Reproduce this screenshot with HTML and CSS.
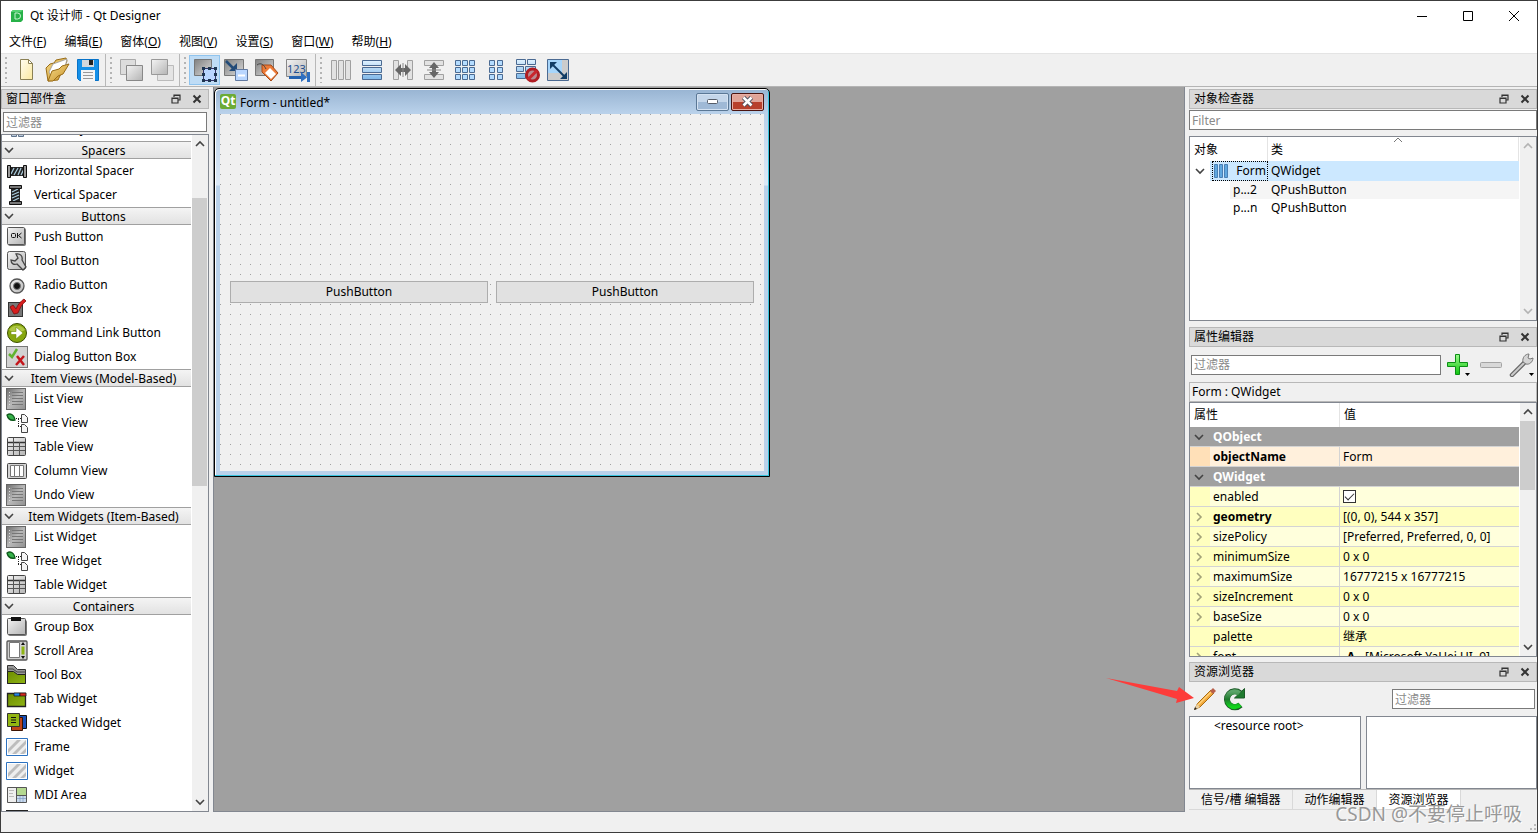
FILE: index.html
```html
<!DOCTYPE html>
<html lang="zh-CN">
<head>
<meta charset="UTF-8">
<meta name="viewport" content="width=device-width, initial-scale=1.0">
<title>Qt 设计师 - Qt Designer</title>
<link rel="stylesheet" href="styles.css">
</head>
<body>

<!-- shared icons -->
<svg class="sprite" aria-hidden="true">
  <defs>
    <linearGradient id="gGray" x1="0" y1="0" x2="1" y2="1"><stop offset="0" stop-color="#f4f4f4"/><stop offset="1" stop-color="#b4b4b4"/></linearGradient>
    <linearGradient id="gDark" x1="0" y1="0" x2="1" y2="1"><stop offset="0" stop-color="#808080"/><stop offset="1" stop-color="#dcdcdc"/></linearGradient>
    <linearGradient id="gList" x1="0" y1="0" x2="1" y2="1"><stop offset="0" stop-color="#6c6c6c"/><stop offset=".5" stop-color="#b8b8b8"/><stop offset="1" stop-color="#909090"/></linearGradient>
    <linearGradient id="gBlue" x1="0" y1="0" x2="0" y2="1"><stop offset="0" stop-color="#e0f2ff"/><stop offset="1" stop-color="#7fb8e8"/></linearGradient>
    <linearGradient id="gGreen" x1="0" y1="0" x2="1" y2="1"><stop offset="0" stop-color="#6c8c00"/><stop offset="1" stop-color="#8fb414"/></linearGradient>
    <linearGradient id="gFolder" x1="0" y1="0" x2="1" y2="1"><stop offset="0" stop-color="#f7dc8a"/><stop offset="1" stop-color="#c8922a"/></linearGradient>
    <linearGradient id="gPage" x1="0" y1="0" x2="1" y2="1"><stop offset="0" stop-color="#fffdf0"/><stop offset="1" stop-color="#fbe9a0"/></linearGradient>
    <linearGradient id="gPlus" x1="0" y1="0" x2="0" y2="1"><stop offset="0" stop-color="#9dfb8d"/><stop offset="1" stop-color="#0fc40f"/></linearGradient>
    <linearGradient id="gReload" x1="0" y1="0" x2="0" y2="1"><stop offset="0" stop-color="#5aa468"/><stop offset=".5" stop-color="#1f7a2e"/><stop offset="1" stop-color="#10d41c"/></linearGradient>
  </defs>
  <symbol id="down" viewBox="0 0 10 10"><path d="M1 3l4 4 4-4" fill="none" stroke="#444" stroke-width="1.600"/></symbol>
  <symbol id="up" viewBox="0 0 10 10"><path d="M1 7l4-4 4 4" fill="none" stroke="#444" stroke-width="1.600"/></symbol>
  <symbol id="right" viewBox="0 0 10 10"><path d="M3 1l4 4-4 4" fill="none" stroke="#a3a37a" stroke-width="1.600"/></symbol>
  <symbol id="float" viewBox="0 0 10 10"><path d="M3 3V1h6v5H7M3 1.500h6M1 4h6v5H1zM1 4.500h6" fill="none" stroke="#333" stroke-width="1.200"/></symbol>
  <symbol id="close" viewBox="0 0 10 10"><path d="M1.500 1.500l7 7M8.500 1.500l-7 7" stroke="#333" stroke-width="2"/></symbol>

  <symbol id="hspacer" viewBox="0 0 22 22"><path d="M4 7h14v9H4z" fill="#222"/><path d="M5 14l3-6M8 15l4-7M12 15l3-7M15 15l3-6" stroke="#a9cbdc" stroke-width="1.300"/><path d="M1.500 5.500h3v12h-3zM17.500 5.500h3v12h-3z" fill="#999" stroke="#111"/></symbol>
  <symbol id="vspacer" viewBox="0 0 22 22"><path d="M5 4h9v14H5z" fill="#222"/><path d="M6 8l6-3M6 11l7-3M6 14l7-3M7 17l6-3" stroke="#a9cbdc" stroke-width="1.300"/><path d="M3.500 1.500h12v3h-12zM3.500 17.500h12v3h-12z" fill="#777" stroke="#111"/></symbol>
  <symbol id="pushbtn" viewBox="0 0 22 22"><rect x="2" y="2" width="18" height="18" rx="2" fill="#777"/><rect x="1.500" y="1.500" width="17" height="17" rx="1" fill="url(#gGray)" stroke="#555"/><rect x="5.500" y="7.500" width="4" height="4" rx="1" fill="none" stroke="#111"/><path d="M11.500 7v5M15.500 7l-3 2.500 3 2.500" fill="none" stroke="#111"/></symbol>
  <symbol id="toolbtn" viewBox="0 0 22 22"><rect x="1.500" y="1.500" width="18" height="18" rx="2" fill="url(#gGray)" stroke="#555"/><path d="M10 4c4-1 7 2 6 6l4 7-3 3-6-6c-3 1-6 0-6-4l4 1 3-3z" fill="#ccc" stroke="#444" stroke-width="1.300"/></symbol>
  <symbol id="radio" viewBox="0 0 22 22"><circle cx="11" cy="12" r="7" fill="url(#gGray)" stroke="#555" stroke-width="1.300"/><circle cx="11" cy="12" r="3.500" fill="#111" stroke="#777"/></symbol>
  <symbol id="check" viewBox="0 0 22 22"><rect x="2.500" y="4.500" width="14" height="14" fill="#777" stroke="#333"/><path d="M4 9l3-2 3 4c2-5 5-8 8-10l2 2c-4 3-6 7-8 12l-4 1z" fill="#d81e1e" stroke="#7d0d0d" stroke-width=".8"/></symbol>
  <symbol id="cmdlink" viewBox="0 0 22 22"><circle cx="11" cy="11" r="9.500" fill="#86a70e" stroke="#3d4f00"/><path d="M3 8a9 8 0 0 1 16 0c-5 3-11 3-16 0z" fill="#c2d55c" opacity=".7"/><path d="M5 9.500h5V5l7 6-7 6v-4.500H5z" fill="#fff" stroke="#6f8d08" stroke-width=".6"/></symbol>
  <symbol id="dlgbox" viewBox="0 0 22 22"><rect x=".5" y=".5" width="21" height="21" fill="#d2d2d2" stroke="#777"/><path d="M3 8l3 3 5-8" fill="none" stroke="#62b32e" stroke-width="2.500"/><path d="M11 10l7 9M18 10l-8 9" stroke="#c4161c" stroke-width="2.500"/></symbol>
  <symbol id="list" viewBox="0 0 22 22"><rect x=".5" y=".5" width="19" height="21" fill="url(#gList)" stroke="#666"/><path d="M6 4.500h11M6 7.500h11M6 10.500h11M6 13.500h11M6 16.500h11" stroke="#777"/><path d="M3 4.500h1M3 7.500h1M3 10.500h1M3 13.500h1M3 16.500h1" stroke="#ddd"/></symbol>
  <symbol id="tree" viewBox="0 0 22 22"><path d="M1 3c3-2 7-1 8 5-4 1-7-1-8-5z" fill="#36b24a" stroke="#0f5a1c" stroke-width="1.300"/><path d="M10 6.500h5M12.500 7v8M12 14.500h3" fill="none" stroke="#222" stroke-dasharray="1 1"/><path d="M15.500 2.500h3l3 3v5h-6zM15.500 12.500h3l3 3v5h-6z" fill="#f5f5f5" stroke="#444"/></symbol>
  <symbol id="table" viewBox="0 0 22 22"><rect x="1.500" y="1.500" width="18" height="18" rx="1" fill="url(#gGray)" stroke="#444"/><path d="M2 6.500h17" stroke="#333" stroke-width="1.500"/><path d="M2 10.500h17M2 14.500h17M7.500 2v17M13.500 6v13" stroke="#555"/></symbol>
  <symbol id="column" viewBox="0 0 22 22"><rect x="1.500" y="3.500" width="19" height="15" rx="1" fill="#d4d4d4" stroke="#444"/><path d="M4.500 5.500h4v11h-4zM8.500 5.500h5v11h-5zM13.500 5.500h4v11h-4z" fill="#fff" stroke="#777"/></symbol>
  <symbol id="group" viewBox="0 0 22 22"><rect x="2" y="4" width="19" height="16" rx="2" fill="#777"/><rect x="1.500" y="2.500" width="18" height="16" rx="1" fill="url(#gGray)" stroke="#555"/><path d="M5 1h10v4H5z" fill="#111"/></symbol>
  <symbol id="scroll" viewBox="0 0 22 22"><rect x="1" y="1" width="20" height="19" rx="1" fill="#d0d0d0" stroke="#555" stroke-width="1.300"/><path d="M3.500 2.500h10v15h-10z" fill="#fff" stroke="#777"/><path d="M15.500 6.500h3v8h-3z" fill="#8fb414"/><path d="M15 5l2-3 2 3zM15 16h4l-2 3z" fill="#111"/></symbol>
  <symbol id="toolbox" viewBox="0 0 22 22"><path d="M1.500 1.500h6l4 4h8v14h-18z" fill="#999" stroke="#333"/><path d="M1 5h6l4 3h9" fill="none" stroke="#444"/><path d="M1.500 7.500h6l4 3h8v9h-18z" fill="url(#gGreen)" stroke="#222"/></symbol>
  <symbol id="tab" viewBox="0 0 22 22"><path d="M1.500 5.500h18v13h-18z" fill="url(#gGreen)" stroke="#222" stroke-width="1.300"/><path d="M8 5h6v3H8z" fill="#2688e8" stroke="#111" stroke-width=".7"/><path d="M14 5h6v3h-6z" fill="#d4281e" stroke="#111" stroke-width=".7"/></symbol>
  <symbol id="stacked" viewBox="0 0 22 22"><path d="M9.500 3.500h11v13h-11z" fill="#1950b8" stroke="#111"/><path d="M5.500 5.500h11v13h-11z" fill="#bd4419" stroke="#3b1303"/><path d="M1.500 1.500h12v13h-12z" fill="#92b512" stroke="#333"/><path d="M5 5.500h5M5 8h5M5 10.500h5" stroke="#111"/></symbol>
  <symbol id="frame" viewBox="0 0 22 22"><path d="M.5 2.500h21v17H.5z" fill="#fff" stroke="#2d72c0"/><path d="M2 4h18v14H2z" fill="#eee"/><path d="M2 13l9-9h4L2 17zM6 18L20 4v4L10 18zM14 18l6-6v4l-2 2z" fill="#bdbdbd"/></symbol>
  <symbol id="mdi" viewBox="0 0 22 22"><path d="M1.500 3.500h19v15h-19z" fill="#eee" stroke="#555"/><path d="M11 4h9v7h-9z" fill="#b4d890"/><path d="M11 12h9v6h-9z" fill="#c9daee"/><path d="M10.500 4v15M11 11.500h9" stroke="#555"/><path d="M3 6.500h5M3 9.500h4M3 12.500h5" stroke="#bbb"/><path d="M11 14.500h9M14 12v6M17 12v6" stroke="#7e9bc0" stroke-width=".7"/></symbol>
</svg>

<header class="titlebar">
  <svg class="app-icon" width="14" height="14" viewBox="0 0 14 14"><path d="M3 1h10v10l-2 2H1V3z" fill="#27b148"/><path d="M1 3l2-2h10l-2 2z" fill="#54d171"/><path d="M5 4h2.500a3 3 0 0 1 0 6H5z" fill="none" stroke="#c7f5d0"/></svg>
  <h1>Qt 设计师 - Qt Designer</h1>
  <div class="window-controls">
    <button aria-label="最小化"><svg width="12" height="12"><path d="M1 6.500h10" stroke="#000"/></svg></button>
    <button aria-label="最大化"><svg width="12" height="12"><path d="M1.500 1.500h9v9h-9z" fill="none" stroke="#000"/></svg></button>
    <button aria-label="关闭"><svg width="12" height="12"><path d="M1 1l10 10M11 1L1 11" stroke="#000"/></svg></button>
  </div>
</header>

<nav class="menubar">
  <button>文件(<u>F</u>)</button>
  <button>编辑(<u>E</u>)</button>
  <button>窗体(<u>O</u>)</button>
  <button>视图(<u>V</u>)</button>
  <button>设置(<u>S</u>)</button>
  <button>窗口(<u>W</u>)</button>
  <button>帮助(<u>H</u>)</button>
</nav>

<div class="toolbar">
  <div class="tool-group">
    <button aria-label="新建"><svg width="24" height="24"><path d="M6.500 1.500h8l4 4v16h-12z" fill="url(#gPage)" stroke="#8a8054"/><path d="M14.500 1.500v4h4z" fill="#fff" stroke="#8a8054"/></svg></button>
    <button aria-label="打开"><svg width="26" height="26"><path d="M2 11l4-4 4-1 2-3 10-2 1 3-9 19-10 1z" fill="url(#gFolder)" stroke="#9a6d17"/><path d="M5 15l4-8L23 2l-2 8-14 9z" fill="#fff" stroke="#999" stroke-width=".8"/><path d="M4 24l4-10 7-2 3-3 7-2-6 10-5 2-5 5z" fill="url(#gFolder)" stroke="#9a6d17"/></svg></button>
    <button aria-label="保存"><svg width="24" height="24"><path d="M1.500 1.500h21v21h-19l-2-2z" fill="#1590e8" stroke="#0873c8"/><path d="M6 2h12v7H6z" fill="#d4d8dc"/><path d="M13 2h4v5h-4z" fill="#222"/><path d="M5 12h14v11H5z" fill="#f5f5f5"/><path d="M7 14.500h10M7 17.500h10M7 20.500h10" stroke="#999"/></svg></button>
  </div>
  <div class="tool-group">
    <button aria-label="置后"><svg width="24" height="24"><path d="M1.500 1.500h15v15h-15z" fill="#ddd" stroke="#aaa"/><path d="M7.500 7.500h16v15h-16z" fill="url(#gGray)" stroke="#888"/></svg></button>
    <button aria-label="置前"><svg width="24" height="24"><path d="M7.500 7.500h16v15h-16z" fill="#e4e4e4" stroke="#bbb"/><path d="M1.500 1.500h16v15h-16z" fill="url(#gGray)" stroke="#999"/></svg></button>
  </div>
  <div class="tool-group">
    <button class="active" aria-label="编辑窗口部件"><svg width="26" height="26"><path d="M2.500 2.500h17v16h-17z" fill="url(#gDark)" stroke="#777"/><path d="M11.500 11.500h12v12h-12z" fill="#b9d6ff" stroke="#336"/><path d="M10 10h3v3h-3zM16 10h3v3h-3zM22 10h3v3h-3zM10 16h3v3h-3zM22 16h3v3h-3zM10 22h3v3h-3zM16 22h3v3h-3zM22 22h3v3h-3z" fill="#1d3550"/></svg></button>
    <button aria-label="编辑信号/槽"><svg width="24" height="24"><path d="M.5 1.500h19v16H.5z" fill="url(#gDark)" stroke="#777"/><path d="M2 3l8 8" stroke="#234b78" stroke-width="2.500"/><path d="M13 5v8H5z" fill="#234b78"/><path d="M11.500 11.500h12v11h-12z" fill="#b9d6ff" stroke="#6179a0"/><path d="M14 17.500h7" stroke="#fff" stroke-width="2"/></svg></button>
    <button aria-label="编辑伙伴"><svg width="24" height="24"><path d="M.5 1.500h18v16H.5z" fill="url(#gDark)" stroke="#777"/><path d="M7 7h9l7 8-7 8-9-9z" fill="#ed7b38" stroke="#a54816"/><path d="M15 10l6 6-5 5-6-6z" fill="#fff"/><path d="M2 7c4-3 7 0 9 4" fill="none" stroke="#444"/></svg></button>
    <button aria-label="编辑 Tab 顺序"><svg width="26" height="26"><path d="M1.500 2.500h20v17h-20z" fill="url(#gGray)" stroke="#888"/><text x="2" y="16" class="tab-order">123</text><path d="M4 20.500h13" stroke="#2563b0" stroke-width="3"/><path d="M16 15l6 5.500-6 4.500zM22 15h3v10h-3z" fill="#2f6fc0"/></svg></button>
  </div>
  <div class="tool-group">
    <button aria-label="水平布局"><svg width="24" height="24"><path d="M2.500 2.500h5v19h-5zM9.500 2.500h5v19h-5zM16.500 2.500h5v19h-5z" fill="#e2e2e2" stroke="#a0a0a0"/></svg></button>
    <button aria-label="垂直布局"><svg width="24" height="24"><path d="M2.500 2.500h19v5h-19zM2.500 9.500h19v5h-19zM2.500 16.500h19v5h-19z" fill="url(#gBlue)" stroke="#4b6a92"/></svg></button>
    <button aria-label="使用分裂器水平布局"><svg width="24" height="24"><path d="M2.500 2.500h5v19h-5zM16.500 2.500h5v19h-5z" fill="#e2e2e2" stroke="#a0a0a0"/><path d="M4 12l6-6v4h4V6l6 6-6 6v-4h-4v4z" fill="#666"/><path d="M12 5v14" stroke="#888"/></svg></button>
    <button aria-label="使用分裂器垂直布局"><svg width="24" height="24"><path d="M2.500 2.500h19v5h-19zM2.500 16.500h19v5h-19z" fill="#e2e2e2" stroke="#a0a0a0"/><path d="M12 4l5 6h-3v4h3l-5 6-5-6h3v-4H7z" fill="#666"/><path d="M5 12h14" stroke="#888"/></svg></button>
    <button aria-label="栅格布局"><svg width="24" height="24"><path d="M2.500 2.500h5v5h-5zM9.500 2.500h5v5h-5zM16.500 2.500h5v5h-5zM2.500 9.500h5v5h-5zM9.500 9.500h5v5h-5zM16.500 9.500h5v5h-5zM2.500 16.500h5v5h-5zM9.500 16.500h5v5h-5zM16.500 16.500h5v5h-5z" fill="#b4dcff" stroke="#4b6a92"/></svg></button>
    <button aria-label="窗体布局"><svg width="24" height="24"><path d="M5.500 2.500h5v5h-5zM13.500 2.500h5v5h-5zM5.500 9.500h5v5h-5zM13.500 9.500h5v5h-5zM5.500 16.500h5v5h-5zM13.500 16.500h5v5h-5z" fill="#b4dcff" stroke="#4b6a92"/></svg></button>
    <button aria-label="打破布局"><svg width="26" height="26"><path d="M2.500 2.500h9v5h-9zM13.500 2.500h8v5h-8zM2.500 9.500h7v5h-7zM11.500 9.500h10v5h-10zM2.500 16.500h9v5h-9z" fill="url(#gBlue)" stroke="#4b6a92"/><circle cx="18.500" cy="18" r="6" fill="#b98a90" stroke="#b01c22" stroke-width="3"/><path d="M14 22.500l9-9" stroke="#c8262c" stroke-width="3"/></svg></button>
    <button aria-label="调整大小"><svg width="24" height="24"><path d="M1.500 1.500h21v21h-21z" fill="#ccc" stroke="#4b6a92"/><path d="M2 2h14v13H2z" fill="#a7d5fa"/><path d="M5 5l13 13" stroke="#123d66" stroke-width="2"/><path d="M4 4h7l-7 7zM21 21h-7l7-7z" fill="#123d66"/></svg></button>
  </div>
</div>

<main class="workspace">
  <aside class="dock widget-box">
    <div class="dock-title"><h2>窗口部件盒</h2><button aria-label="浮动"><svg><use href="#float"/></svg></button><button aria-label="关闭"><svg><use href="#close"/></svg></button></div>
    <input class="filter" type="text" placeholder="过滤器" aria-label="过滤窗口部件">
    <div class="panel scroll-panel widget-list">
      <div class="panel-body">
        <ul><li class="cut-top"><svg><path d="M5.500 11.500h5v7h-5zM12.500 11.500h5v7h-5z" fill="#b8c8da" stroke="#60748c"/></svg>Form Layout</li></ul>
        <h3><svg><use href="#down"/></svg><span>Spacers</span></h3>
        <ul>
          <li><svg><use href="#hspacer"/></svg>Horizontal Spacer</li>
          <li><svg><use href="#vspacer"/></svg>Vertical Spacer</li>
        </ul>
        <h3><svg><use href="#down"/></svg><span>Buttons</span></h3>
        <ul>
          <li><svg><use href="#pushbtn"/></svg>Push Button</li>
          <li><svg><use href="#toolbtn"/></svg>Tool Button</li>
          <li><svg><use href="#radio"/></svg>Radio Button</li>
          <li><svg><use href="#check"/></svg>Check Box</li>
          <li><svg><use href="#cmdlink"/></svg>Command Link Button</li>
          <li><svg><use href="#dlgbox"/></svg>Dialog Button Box</li>
        </ul>
        <h3><svg><use href="#down"/></svg><span>Item Views (Model-Based)</span></h3>
        <ul>
          <li><svg><use href="#list"/></svg>List View</li>
          <li><svg><use href="#tree"/></svg>Tree View</li>
          <li><svg><use href="#table"/></svg>Table View</li>
          <li><svg><use href="#column"/></svg>Column View</li>
          <li><svg><use href="#list"/></svg>Undo View</li>
        </ul>
        <h3><svg><use href="#down"/></svg><span>Item Widgets (Item-Based)</span></h3>
        <ul>
          <li><svg><use href="#list"/></svg>List Widget</li>
          <li><svg><use href="#tree"/></svg>Tree Widget</li>
          <li><svg><use href="#table"/></svg>Table Widget</li>
        </ul>
        <h3><svg><use href="#down"/></svg><span>Containers</span></h3>
        <ul>
          <li><svg><use href="#group"/></svg>Group Box</li>
          <li><svg><use href="#scroll"/></svg>Scroll Area</li>
          <li><svg><use href="#toolbox"/></svg>Tool Box</li>
          <li><svg><use href="#tab"/></svg>Tab Widget</li>
          <li><svg><use href="#stacked"/></svg>Stacked Widget</li>
          <li><svg><use href="#frame"/></svg>Frame</li>
          <li><svg><use href="#frame"/></svg>Widget</li>
          <li><svg><use href="#mdi"/></svg>MDI Area</li>
          <li><svg><path d="M0 2h22v18H0z" fill="#222"/></svg></li>
        </ul>
      </div>
      <div class="scrollbar"><svg><use href="#up"/></svg><div class="track"><div class="thumb thumb-widgets"></div></div><svg><use href="#down"/></svg></div>
    </div>
  </aside>

  <section class="mdi">
    <div class="form-window">
      <div class="form-title">
        <span class="qt-logo">Qt</span>
        <span class="form-name">Form - untitled*</span>
        <button class="form-min" aria-label="最小化"><svg width="13" height="7"><rect x="1.500" y="1.500" width="10" height="4" rx="1" fill="#fff" stroke="#555c68"/></svg></button>
        <button class="form-close" aria-label="关闭"><svg width="13" height="11"><path d="M2.500 1.500l8 8M10.500 1.500l-8 8" stroke="#4b5160" stroke-width="4.500"/><path d="M2.500 1.500l8 8M10.500 1.500l-8 8" stroke="#fff" stroke-width="2.500"/></svg></button>
      </div>
      <div class="form-canvas">
        <button>PushButton</button>
        <button>PushButton</button>
      </div>
    </div>
  </section>

  <aside class="right-docks">
    <section class="dock inspector">
      <div class="dock-title"><h2>对象检查器</h2><button aria-label="浮动"><svg><use href="#float"/></svg></button><button aria-label="关闭"><svg><use href="#close"/></svg></button></div>
      <input class="filter" type="text" placeholder="Filter" aria-label="过滤对象">
      <div class="panel scroll-panel">
        <div class="panel-body">
          <table class="objects">
            <thead><tr><th class="obj-col">对象</th><th>类<svg class="sort" width="10" height="6"><path d="M1 5l4-4 4 4" fill="none" stroke="#777"/></svg></th></tr></thead>
            <tbody>
              <tr class="selected"><td><div class="obj-root"><svg width="10" height="10"><use href="#down"/></svg><span class="obj-focus"><svg width="16" height="16"><path d="M1.500 1.500h3v13h-3zM6.500 1.500h3v13h-3zM11.500 1.500h3v13h-3z" fill="#5fa8e0" stroke="#4a7fb5"/></svg>Form</span></div></td><td>QWidget</td></tr>
              <tr class="alt"><td class="child">p...2</td><td>QPushButton</td></tr>
              <tr><td class="child">p...n</td><td>QPushButton</td></tr>
            </tbody>
          </table>
        </div>
        <div class="scrollbar disabled"><svg><use href="#up"/></svg><div class="track"></div><svg><use href="#down"/></svg></div>
      </div>
    </section>

    <section class="dock properties">
      <div class="dock-title"><h2>属性编辑器</h2><button aria-label="浮动"><svg><use href="#float"/></svg></button><button aria-label="关闭"><svg><use href="#close"/></svg></button></div>
      <div class="prop-tools">
        <input class="filter" type="text" placeholder="过滤器" aria-label="过滤属性">
        <button aria-label="添加动态属性"><svg width="26" height="24"><path d="M8.500 1.500h4v8h8v4h-8v8h-4v-8h-8v-4h8z" fill="url(#gPlus)" stroke="#0a8f14"/><path d="M18 20h5l-2.500 3z" fill="#000"/></svg></button>
        <button aria-label="删除动态属性"><svg width="24" height="24"><rect x="1.500" y="9.500" width="21" height="5" rx="1" fill="#d8d8d8" stroke="#a4a4a4"/></svg></button>
        <button aria-label="配置属性编辑器"><svg width="26" height="24"><path d="M3 22L16 9" stroke="#666" stroke-width="4.500" stroke-linecap="round"/><path d="M3 22L16 9" stroke="#ccc" stroke-width="2" stroke-linecap="round"/><path d="M14 9c-1-4 2-8 6-8l-1 4 2 1 3-1c0 4-4 7-7 6z" fill="#d4d4d4" stroke="#777"/><path d="M20 20h5l-2.500 3z" fill="#000"/></svg></button>
      </div>
      <div class="object-label">Form : QWidget</div>
      <div class="panel scroll-panel">
        <div class="panel-body">
          <table class="props">
            <colgroup><col class="fold-col"><col class="name-col"><col></colgroup>
            <thead><tr><th colspan="2">属性</th><th>值</th></tr></thead>
            <tbody>
              <tr class="category"><td class="fold"><svg><use href="#down"/></svg></td><td colspan="2">QObject</td></tr>
              <tr class="orange"><td class="fold"></td><td class="name changed">objectName</td><td>Form</td></tr>
              <tr class="category"><td class="fold"><svg><use href="#down"/></svg></td><td colspan="2">QWidget</td></tr>
              <tr><td class="fold"></td><td class="name"><label for="enabled">enabled</label></td><td><input type="checkbox" id="enabled" checked></td></tr>
              <tr class="alt"><td class="fold"><svg><use href="#right"/></svg></td><td class="name changed">geometry</td><td>[(0, 0), 544 x 357]</td></tr>
              <tr><td class="fold"><svg><use href="#right"/></svg></td><td class="name">sizePolicy</td><td>[Preferred, Preferred, 0, 0]</td></tr>
              <tr class="alt"><td class="fold"><svg><use href="#right"/></svg></td><td class="name">minimumSize</td><td>0 x 0</td></tr>
              <tr><td class="fold"><svg><use href="#right"/></svg></td><td class="name">maximumSize</td><td>16777215 x 16777215</td></tr>
              <tr class="alt"><td class="fold"><svg><use href="#right"/></svg></td><td class="name">sizeIncrement</td><td>0 x 0</td></tr>
              <tr><td class="fold"><svg><use href="#right"/></svg></td><td class="name">baseSize</td><td>0 x 0</td></tr>
              <tr class="alt"><td class="fold"></td><td class="name">palette</td><td>继承</td></tr>
              <tr><td class="fold"><svg><use href="#right"/></svg></td><td class="name">font</td><td><b class="font-sample">A</b>[Microsoft YaHei UI, 9]</td></tr>
            </tbody>
          </table>
        </div>
        <div class="scrollbar"><svg><use href="#up"/></svg><div class="track"><div class="thumb thumb-props"></div></div><svg><use href="#down"/></svg></div>
      </div>
    </section>

    <section class="dock resources">
      <div class="dock-title"><h2>资源浏览器</h2><button aria-label="浮动"><svg><use href="#float"/></svg></button><button aria-label="关闭"><svg><use href="#close"/></svg></button></div>
      <div class="res-tools">
        <svg class="pointer" width="90" height="28"><path d="M1 1L72 14L74 10L89 21L71 26L72 22Z" fill="#fd3c3a"/></svg>
        <button aria-label="编辑资源"><svg width="24" height="24"><path d="M1.500 22.500l3-6L18 3l3 3L7 20z" fill="#f2a93b" stroke="#a86c14"/><path d="M5 18L18 5" stroke="#ffd27a" stroke-width="1.500"/><path d="M17 4l3-3 3 3-3 3z" fill="#b8604a"/><path d="M1 23l3-6 3 3z" fill="#e8d0a4"/><path d="M1 23l1-3 2 2z" fill="#222"/></svg></button>
        <button aria-label="重新加载"><svg width="24" height="24"><path d="M18.500 18a8 8 0 1 1-.5-12" fill="none" stroke="#1b5a26" stroke-width="6"/><path d="M22.500 1.500v9.500h-10z" fill="#1f7a2e" stroke="#1b5a26"/><path d="M18 17.500a7.500 7.500 0 1 1-.5-11" fill="none" stroke="url(#gReload)" stroke-width="5"/></svg></button>
        <input class="filter" type="text" placeholder="过滤器" aria-label="过滤资源">
      </div>
      <div class="res-lists">
        <div class="panel res-tree">&lt;resource root&gt;</div>
        <div class="panel res-files"></div>
      </div>
    </section>

    <div class="dock-tabs">
      <button>信号/槽 编辑器</button>
      <button>动作编辑器</button>
      <button class="current">资源浏览器</button>
    </div>
  </aside>
</main>

<footer class="statusbar"><svg width="8" height="8"><path d="M5 0h2v2H5zM5 4h2v2H5zM1 4h2v2H1z" fill="#bbb"/></svg></footer>
<div class="watermark">CSDN @不要停止呼吸</div>

</body>
</html>
```
FILE: styles.css
```css
* { box-sizing: border-box; }
body { margin: 0; height: 100vh; display: flex; flex-direction: column; overflow: hidden; position: relative; background: #f0f0f0; border: 1px solid #3c3c3c; color: #000; font: 12px/18px "Noto Sans", "Noto Sans CJK SC", sans-serif; }
h1, h2, h3, ul { margin: 0; padding: 0; font-size: 12px; font-weight: 400; list-style: none; }
button, input { font: inherit; color: inherit; }
button { margin: 0; padding: 0; border: none; background: none; }
svg { display: block; flex: none; }
table { border-collapse: separate; border-spacing: 0; table-layout: fixed; width: 100%; }
th { font-weight: 400; text-align: left; }
.sprite { position: absolute; width: 0; height: 0; }

/* title bar and menu */
.titlebar { display: flex; align-items: center; height: 29px; background: #fff; padding-left: 9px; }
.titlebar h1 { margin-left: 6px; }
.window-controls { display: flex; margin-left: auto; }
.window-controls button { width: 46px; height: 29px; display: flex; align-items: center; justify-content: center; }
.menubar { display: flex; gap: 2px; height: 23px; background: #fff; }
.menubar button { padding: 0 8px; }

/* tool bar */
.toolbar { display: flex; height: 34px; border-top: 1px solid #e4e4e4; border-bottom: 1px solid #b4b4b4; }
.tool-group { display: flex; align-items: center; padding-right: 2px; border-right: 1px solid #b8b8b8; }
.tool-group:last-child { border-right: none; }
.tool-group::before { content: ""; width: 2px; height: 26px; margin: 0 3px 0 4px; background: repeating-linear-gradient(#b4b4b4 0 2px, transparent 2px 5px); }
.tool-group button { width: 31px; height: 30px; display: flex; align-items: center; justify-content: center; }
.tool-group .active { background: #bfdcf5; border: 1px solid #90c4ee; }
.tab-order { font: 11px "Noto Sans", sans-serif; fill: #1f4f8f; }

.workspace { flex: 1; min-height: 0; display: flex; }

/* docks */
.dock { display: flex; flex-direction: column; min-height: 0; }
.dock-title { display: flex; flex: none; align-items: center; height: 20px; padding: 0 6px 0 4px; background: #d9d9d9; border: 1px solid #b8b8b8; }
.dock-title h2 { flex: 1; }
.dock-title button { margin-left: 11px; }
.dock-title svg { width: 10px; height: 10px; }
.filter { height: 20px; flex: none; min-width: 0; padding: 0 2px; background: #fff; border: 1px solid #7a7a7a; outline: none; }
.filter::placeholder { color: #8a8a8a; opacity: 1; }
.panel { background: #fff; border: 1px solid #828790; }
.scroll-panel { display: flex; flex: 1; min-height: 0; }
.panel-body { flex: 1; min-width: 0; overflow: hidden; padding-right: 1px; }

.scrollbar { width: 16px; flex: none; display: flex; flex-direction: column; align-items: center; padding-right: 1px; background: #f0f0f0; }
.scrollbar svg { width: 10px; height: 10px; margin: 4px 0; }
.scrollbar .track { flex: 1; width: 100%; display: flex; flex-direction: column; }
.scrollbar.disabled svg { opacity: .35; }
.thumb { background: #cdcdcd; }
.thumb-widgets { margin-top: 45px; height: 45%; }
.thumb-props { height: 32%; }

/* widget box */
.widget-box { width: 208px; padding-top: 2px; }
.widget-box .filter { margin: 3px 2px 2px; }
.widget-list h3 { display: flex; align-items: center; height: 18px; border-top: 1px solid #a0a0a0; border-bottom: 1px solid #a0a0a0; background: linear-gradient(#f4f4f4, #e2e2e2); }
.widget-list h3 svg { width: 10px; height: 10px; margin: 0 2px; }
.widget-list h3 span { flex: 1; padding-top: 2px; text-align: center; }
.widget-list li { display: flex; align-items: center; height: 24px; padding-left: 4px; }
.widget-list li svg { width: 22px; height: 22px; margin-right: 6px; }
.widget-list .cut-top { margin-top: -18px; }

/* form area */
.mdi { flex: 1; position: relative; margin: 0 4px; background: #a0a0a0; border: 1px solid #828790; border-top: none; }
.form-window { position: absolute; left: 0; top: 1px; width: 556px; padding: 0 5px 5px; border: 1px solid #000; border-radius: 5px 5px 0 0; background: linear-gradient(#98b4d2, #b9d1ea 24px, #dce9f7 96px, #b9d1ea 97px); box-shadow: inset -1px -1px #38c4de, inset 1px 1px #fff; }
.form-title { display: flex; align-items: center; height: 25px; }
.qt-logo { width: 16px; height: 15px; line-height: 14px; border-radius: 2px; background: #6cab35; color: #fff; font-weight: 700; text-align: center; }
.form-name { flex: 1; margin-left: 4px; padding-top: 3px; }
.form-title button { width: 33px; height: 18px; display: flex; align-items: center; justify-content: center; border-radius: 2px; }
.form-min { border: 1px solid #5b7896; background: linear-gradient(#c4d6ea 50%, #9fb9d6 50%); box-shadow: inset 0 0 0 1px #d4e2f2; }
.form-close { margin-left: 2px; border: 1px solid #4a1410; background: linear-gradient(#e0a498 50%, #b8402c 50%); box-shadow: inset 0 0 0 1px #e8aea4; }
.form-canvas { display: flex; align-items: center; gap: 8px; height: 357px; padding: 0 10px 1px; background: #f0f0f0 conic-gradient(from 270deg at 1px 1px, #a0a0a0 90deg, transparent 0) 0 0 / 10px 10px; }
.form-canvas button { flex: 1; height: 22px; background: #e1e1e1; border: 1px solid #adadad; }

/* right column */
.right-docks { width: 348px; display: flex; flex-direction: column; padding-top: 2px; }
.inspector { flex: 232 1 0; }
.inspector .filter { margin: 1px 0 6px; }
.objects th { position: relative; height: 24px; padding: 2px 4px 0; border-right: 1px solid #e4e4e4; }
.objects th + th { padding-left: 3px; }
.objects .obj-col { width: 78px; }
.sort { position: absolute; left: 50%; top: 0; }
.objects td { height: 18px; padding: 0 3px; white-space: nowrap; }
.objects .selected td { height: 20px; background: #cce8ff; }
.objects .selected td:first-child { padding: 0; background: linear-gradient(90deg, #fff 20px, #cce8ff 20px); }
.obj-root { display: flex; align-items: center; gap: 7px; padding-left: 5px; }
.obj-focus { flex: 1; display: flex; align-items: center; justify-content: space-between; border: 1px dotted #000; padding-right: 1px; }
.objects .child { padding-left: 43px; }
.objects .alt td { background: #f5f5f5; }
.objects .alt .child { background: linear-gradient(90deg, #fff 40px, #f5f5f5 40px); }

.properties { flex: 330 1 0; margin-top: 6px; }
.prop-tools { display: flex; align-items: center; flex: none; gap: 6px; height: 35px; padding: 0 2px; }
.prop-tools .filter { flex: 1; }
.object-label { height: 20px; flex: none; padding: 0 2px; border: 1px solid #b8b8b8; }
.fold-col { width: 20px; }
.name-col { width: 130px; }
.props th { height: 24px; padding: 0 4px; }
.props th:first-child { border-right: 1px solid #e4e4e4; }
.props td { height: 20px; padding: 0 3px; border-bottom: 1px solid #d4d4d4; background: #ffffdc; white-space: nowrap; }
.props .fold { padding: 0 4px; background: #ffffbf; }
.props .fold svg { width: 10px; height: 10px; }
.props .name { border-right: 1px solid #d4d4d4; }
.props .changed { font-weight: 700; }
.props .alt td { background: #ffffbf; }
.props .orange td { background: #fff0dc; }
.props .orange .fold { background: #ffe0b8; }
.props .category td { background: #a0a0a0; color: #fff; font-weight: 700; }
.props input { appearance: none; display: block; width: 13px; height: 13px; margin: 0; border: 1px solid #333; background: #fff; }
.props input:checked::after { content: ""; display: block; width: 8px; height: 4px; margin: 2px 1px; border: solid #333; border-width: 0 0 1px 1px; transform: rotate(-45deg); }
.font-sample { display: inline-block; width: 16px; margin-right: 6px; text-align: center; }

.resources { flex: 127 1 0; margin-top: 5px; }
.res-tools { position: relative; display: flex; align-items: center; flex: none; gap: 5px; height: 34px; padding: 0 2px 0 4px; }
.res-tools .filter { width: 143px; margin-left: auto; }
.pointer { position: absolute; right: 100%; top: -5px; margin-right: -6px; }
.res-lists { flex: 1; min-height: 0; display: grid; grid-template-columns: 1fr 1fr; gap: 5px; }
.res-tree { padding-left: 24px; }
.dock-tabs { display: flex; flex: none; height: 23px; border-top: 1px solid #b8b8b8; }
.dock-tabs button { height: 20px; padding: 0 11px 0 12px; border: 1px solid #d9d9d9; border-top: none; border-left: none; }
.dock-tabs .current { background: #fff; }

.statusbar { height: 20px; flex: none; display: flex; justify-content: flex-end; align-items: flex-end; }
.watermark { position: absolute; right: 15px; bottom: 5px; font-size: 19px; line-height: 26px; color: #989898; text-shadow: 1px 1px #fff; }
```
